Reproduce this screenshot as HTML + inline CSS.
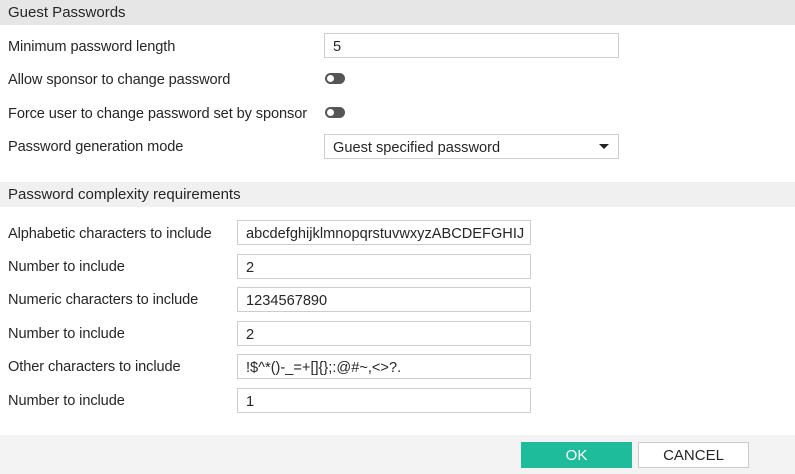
<!DOCTYPE html><html><head><style>
body{margin:0;width:795px;height:474px;background:#fff;font-family:"Liberation Sans",sans-serif;font-size:15px;color:#262626;position:relative;overflow:hidden}
.a{position:absolute}
.h{left:0;width:795px;height:25px;line-height:25px;padding-left:8px;box-sizing:border-box;overflow:hidden}
.l{left:8px;line-height:20px;font-size:14.6px;letter-spacing:-0.1px}
.i{border:1px solid #ccc;height:25px;box-sizing:border-box;padding-left:8px;line-height:26px;font-size:14.6px;background:#fff;overflow:hidden}
.t{width:20px;height:11px;border-radius:6px;background:#555;left:325px}
.t:after{content:"";position:absolute;left:2px;top:2px;width:7px;height:7px;border-radius:50%;background:#fff}
</style></head><body>
<div class="a h" style="top:0;background:#e6e6e6">Guest Passwords</div>
<div class="a l" style="top:37px">Minimum password length</div>
<div class="a i" style="left:324px;top:33px;width:295px">5</div>
<div class="a l" style="top:70px">Allow sponsor to change password</div>
<div class="a t" style="top:73px"></div>
<div class="a l" style="top:104px">Force user to change password set by sponsor</div>
<div class="a t" style="top:107px"></div>
<div class="a l" style="top:137px">Password generation mode</div>
<div class="a i" style="left:324px;top:134px;width:295px">Guest specified password<span class="a" style="right:9px;top:9px;border-left:5px solid transparent;border-right:5px solid transparent;border-top:5px solid #222"></span></div>
<div class="a h" style="top:182px;background:#f0f0f0">Password complexity requirements</div>
<div class="a l" style="top:224px">Alphabetic characters to include</div>
<div class="a i" style="left:237px;top:220px;width:294px;white-space:nowrap">abcdefghijklmnopqrstuvwxyzABCDEFGHIJ</div>
<div class="a l" style="top:257px">Number to include</div>
<div class="a i" style="left:237px;top:254px;width:294px">2</div>
<div class="a l" style="top:290px">Numeric characters to include</div>
<div class="a i" style="left:237px;top:287px;width:294px">1234567890</div>
<div class="a l" style="top:324px">Number to include</div>
<div class="a i" style="left:237px;top:321px;width:294px">2</div>
<div class="a l" style="top:357px">Other characters to include</div>
<div class="a i" style="left:237px;top:354px;width:294px">!$^*()-_=+[]{};:@#~,&lt;&gt;?.</div>
<div class="a l" style="top:391px">Number to include</div>
<div class="a i" style="left:237px;top:388px;width:294px">1</div>
<div class="a" style="left:0;top:435px;width:795px;height:39px;background:#f3f3f3"></div>
<div class="a" style="left:521px;top:442px;width:111px;height:26px;background:#1fbc9b;color:#fff;text-align:center;line-height:27px">OK</div>
<div class="a" style="left:638px;top:442px;width:111px;height:26px;background:#fff;border:1px solid #ccc;box-sizing:border-box;text-align:center;line-height:25px">CANCEL</div>
</body></html>
